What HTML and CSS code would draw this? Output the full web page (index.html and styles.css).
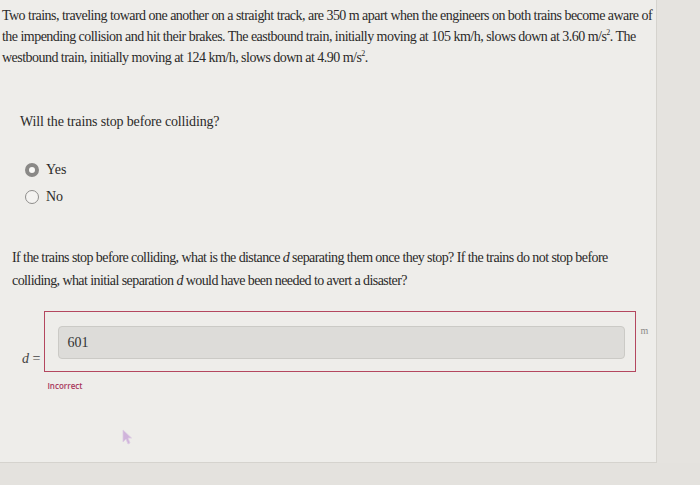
FILE: index.html
```html
<!DOCTYPE html>
<html lang="en">
<head>
    <meta charset="UTF-8">
    <title>Trains problem</title>
    <link rel="stylesheet" href="styles.css">
</head>
<body>
    <div class="page">
        <div class="card">
            <p class="intro">
                Two trains, traveling toward one another on a straight track, are 350 m apart when the engineers on both trains become aware of<br>
                the impending collision and hit their brakes. The eastbound train, initially moving at 105 km/h, slows down at 3.60 m/s<sup>2</sup>. The<br>
                westbound train, initially moving at 124 km/h, slows down at 4.90 m/s<sup>2</sup>.
            </p>

            <p class="prompt">Will the trains stop before colliding?</p>

            <ul class="choices">
                <li><span class="radio checked"></span>Yes</li>
                <li><span class="radio"></span>No</li>
            </ul>

            <p class="followup">
                If the trains stop before colliding, what is the distance <i>d</i> separating them once they stop? If the trains do not stop before<br>
                colliding, what initial separation <i>d</i> would have been needed to avert a disaster?
            </p>

            <div class="answer-row">
                <span class="var"><i>d</i> =</span>
                <div class="answer">
                    <div class="answer-box">
                        <div class="input">601</div>
                    </div>
                    <div class="feedback">Incorrect</div>
                </div>
                <span class="unit">m</span>
            </div>

            <!-- mouse pointer over the page -->
            <svg class="pointer" width="10" height="16" viewBox="0 0 10 16">
                <path d="M1 1 L1 13 L4 10 L6 15 L8 14 L6 9 L9.5 9 Z" fill="#c9a6d8" stroke="#d9c4e2" stroke-width="0.8"/>
            </svg>
        </div>
        <div class="side"></div>
    </div>
</body>
</html>
```

FILE: styles.css
```css
* {
    margin: 0;
    padding: 0;
    box-sizing: border-box;
}

body {
    background: #e4e2de;
    font-family: 'Liberation Serif', 'Times New Roman', serif;
    color: #2b2a29;
    width: 700px;
    height: 485px;
    overflow: hidden;
}

.page {
    display: flex;
    height: 463px;
}

.card {
    position: relative;
    width: 657px;
    background: #eeedea;
    border-right: 1px solid #d5d3ce;
    border-bottom: 1px solid #d5d3ce;
    padding: 5px 0 0 2px;
}

.side {
    flex: 1;
    background: #e5e3df;
}

.intro {
    font-size: 14px;
    line-height: 21px;
    letter-spacing: -0.53px;
    white-space: nowrap;
}

sup {
    font-size: 8px;
    line-height: 0;
}

.prompt {
    margin: 43px 0 0 18px;
    font-size: 14px;
    line-height: 21px;
    letter-spacing: -0.15px;
}

.choices {
    list-style: none;
    margin: 24px 0 0 23px;
}

.choices li {
    display: flex;
    align-items: center;
    gap: 7px;
    height: 27px;
    font-size: 14px;
}

.radio {
    width: 14px;
    height: 14px;
    border-radius: 50%;
    border: 1px solid #8e8d8b;
    background: #f4f3f1;
}

.radio.checked {
    border: 4px solid #8a8987;
    background: #fafaf8;
}

.followup {
    margin: 36px 0 0 10px;
    font-size: 14px;
    line-height: 23px;
    letter-spacing: -0.58px;
    white-space: nowrap;
}

.answer-row {
    display: flex;
    margin: 19px 0 0 20px;
}

.var {
    align-self: flex-start;
    margin: 40px 4px 0 0;
    font-size: 14px;
    color: #444;
}

.answer {
    width: 592px;
}

.answer-box {
    height: 61px;
    border: 1px solid #b4475f;
    padding: 14px 10px 0 13px;
}

.input {
    height: 33px;
    background: #dddcd9;
    border: 1px solid #cbcac6;
    border-radius: 4px;
    padding: 0 8px;
    font-size: 14px;
    line-height: 31px;
    color: #333;
}

.feedback {
    margin: 8px 0 0 3px;
    font-family: 'Open Sans', 'DejaVu Sans', sans-serif;
    font-size: 8px;
    font-weight: 600;
    color: #a8365a;
}

.unit {
    margin: 14px 0 0 4px;
    font-size: 10px;
    color: #8d8c89;
}

.pointer {
    position: absolute;
    left: 122px;
    top: 429px;
    opacity: 0.8;
}
```
